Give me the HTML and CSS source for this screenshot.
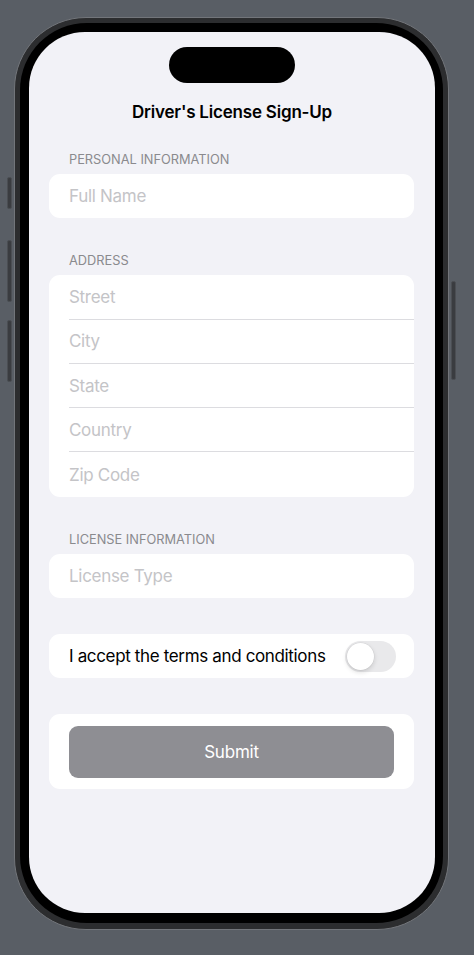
FILE: index.html
```html
<!DOCTYPE html>
<html lang="en">
<head>
<meta charset="utf-8">
<title>Driver's License Sign-Up</title>
<link rel="stylesheet" href="styles.css">
</head>
<body>
<div class="device">
  <span class="btn btn-action"></span>
  <span class="btn btn-vol-up"></span>
  <span class="btn btn-vol-down"></span>
  <span class="btn btn-power"></span>
  <div class="phone">
    <div class="bezel">
      <div class="screen">
        <div class="island"></div>
        <h1 class="title">Driver's License Sign-Up</h1>
        <div class="form">
          <div class="section">
            <div class="section-header">PERSONAL INFORMATION</div>
            <div class="group">
              <div class="row"><div class="row-inner placeholder">Full Name</div></div>
            </div>
          </div>
          <div class="section">
            <div class="section-header">ADDRESS</div>
            <div class="group">
              <div class="row"><div class="row-inner placeholder">Street</div></div>
              <div class="row"><div class="row-inner placeholder">City</div></div>
              <div class="row"><div class="row-inner placeholder">State</div></div>
              <div class="row"><div class="row-inner placeholder">Country</div></div>
              <div class="row"><div class="row-inner placeholder">Zip Code</div></div>
            </div>
          </div>
          <div class="section">
            <div class="section-header">LICENSE INFORMATION</div>
            <div class="group">
              <div class="row"><div class="row-inner placeholder">License Type</div></div>
            </div>
          </div>
          <div class="section section-plain">
            <div class="group">
              <div class="row"><div class="row-inner toggle-row">
                <span class="label">I accept the terms and conditions</span>
                <span class="switch"><span class="knob"></span></span>
              </div></div>
            </div>
          </div>
          <div class="section section-plain">
            <div class="group submit-group">
              <div class="submit">Submit</div>
            </div>
          </div>
        </div>
      </div>
    </div>
  </div>
</div>
</body>
</html>
```

FILE: styles.css
```css
html, body {
  margin: 0;
  padding: 0;
}
body {
  background: #595e65;
  width: 474px;
  height: 955px;
  overflow: hidden;
  font-family: Inter, "Noto Sans", "Liberation Sans", sans-serif;
  -webkit-font-smoothing: antialiased;
}
.device {
  position: relative;
  margin: 17px 0 0 14px;
  width: 435px;
  height: 913px;
}
.btn {
  position: absolute;
  width: 5px;
  background: #3a3c40;
  border: 1px solid #4b4e53;
  box-sizing: border-box;
  border-radius: 2px;
}
.btn-action { left: -7px; top: 160px; height: 32px; }
.btn-vol-up { left: -7px; top: 223px; height: 62px; }
.btn-vol-down { left: -7px; top: 303px; height: 62px; }
.btn-power { left: 437px; top: 264px; height: 99px; }
.phone {
  position: relative;
  width: 435px;
  height: 913px;
  box-sizing: border-box;
  background: #2c2d2f;
  border: 1px solid #72757a;
  border-radius: 72px;
  padding: 5px 5px 6px 5px;
}
.bezel {
  height: 100%;
  box-sizing: border-box;
  background: #000;
  border-radius: 67px;
  padding: 9px 8px 10px 9px;
}
.screen {
  height: 100%;
  background: #f2f2f7;
  border-radius: 56px;
  display: flex;
  flex-direction: column;
  overflow: hidden;
}
.island {
  width: 126px;
  height: 36px;
  margin: 15px auto 0;
  background: #000;
  border-radius: 18px;
  flex: none;
}
.title {
  margin: 18px 0 0;
  font-size: 17px;
  line-height: 22px;
  font-weight: 600;
  color: #000;
  text-align: center;
  letter-spacing: -0.2px;
}
.form {
  padding: 29px 21px 0 20px;
  display: flex;
  flex-direction: column;
}
.section + .section {
  margin-top: 35px;
}
.section-plain {
  margin-top: 36px !important;
}
.section-header {
  padding: 0 20px;
  font-size: 12.8px;
  line-height: 16px;
  color: #8a8a8e;
  margin-bottom: 6px;
  letter-spacing: 0;
}
.group {
  background: #fff;
  border-radius: 11px;
  overflow: hidden;
}
.row {
  padding-left: 20px;
}
.row-inner {
  height: 44.3px;
  box-sizing: border-box;
  display: flex;
  align-items: center;
  border-bottom: 0.7px solid #dcdce0;
  font-size: 17px;
  letter-spacing: -0.3px;
}
.row:last-child .row-inner {
  border-bottom: none;
}
.placeholder {
  color: #c4c4c7;
}
.toggle-row {
  justify-content: space-between;
  padding-right: 18px;
  color: #000;
  height: 44px;
}
.label {
  letter-spacing: -0.35px;
}
.switch {
  width: 51px;
  height: 31px;
  border-radius: 16px;
  background: #e9e9eb;
  display: flex;
  align-items: center;
  padding: 0 2px;
  box-sizing: border-box;
}
.knob {
  width: 27px;
  height: 27px;
  border-radius: 50%;
  background: #fff;
  box-shadow: 0 2px 5px rgba(0,0,0,0.15), 0 0 0 0.5px rgba(0,0,0,0.06);
}
.submit-group {
  padding: 12px 20px 11px;
}
.submit {
  height: 52px;
  border-radius: 9px;
  background: #8e8e93;
  color: #fff;
  font-size: 17px;
  letter-spacing: -0.2px;
  display: flex;
  align-items: center;
  justify-content: center;
}
```
